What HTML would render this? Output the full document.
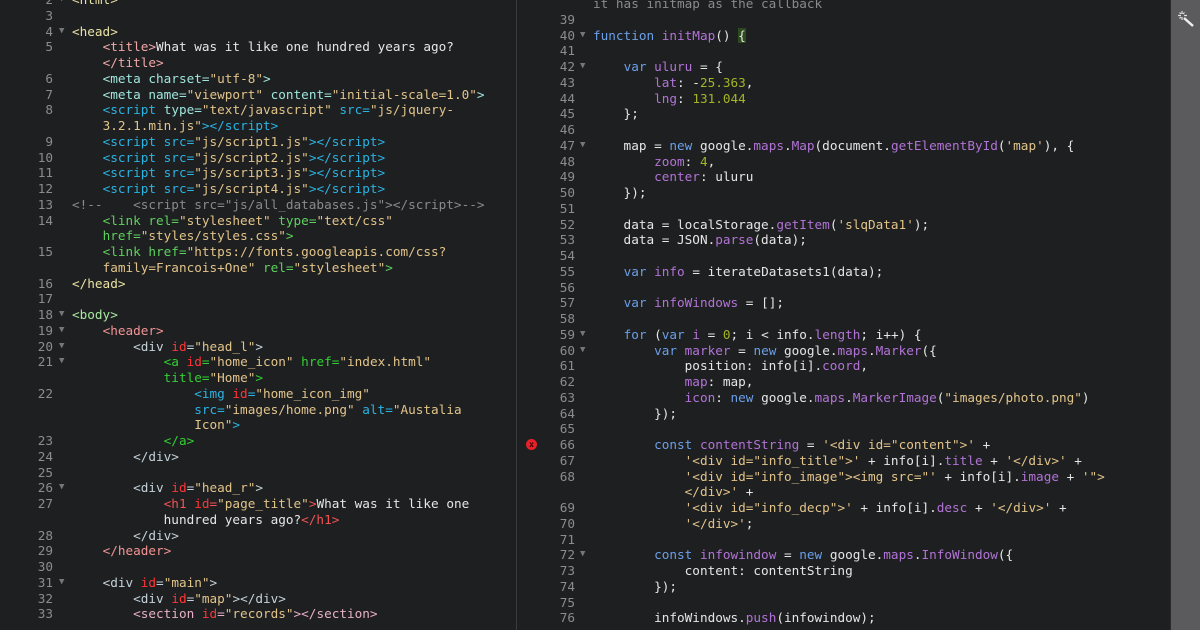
<!DOCTYPE html>
<html><head><meta charset="utf-8"><style>
body{margin:0;width:1200px;height:630px;background:#1e1f21;overflow:hidden;position:relative;font-family:"DejaVu Sans Mono","Liberation Mono",monospace;font-size:12.7px;color:#e6e6e6}
.p{position:absolute;top:0;height:630px;overflow:hidden}
.r{height:15.75px;line-height:15.75px;white-space:pre;position:relative}
.n{position:absolute;text-align:right;color:#8c8c8c}
.f{position:absolute;color:#777;font-size:9px}
.c{position:absolute}
#L .n{left:0;width:53px}#L .f{left:59px}#L .c{left:72px}
#R .n{left:0;width:58px}#R .f{left:63px}#R .c{left:76px}
.hd{color:#e8e2a4}.ti{color:#f2a8a8}.me{color:#9ee6de}.sc{color:#2bb3e2}.s{color:#e2c48a}.cm{color:#8a8a8a}.ln{color:#5cd25c}.bo{color:#a8e8a0}.he{color:#f29494}.dv{color:#c4d2da}.rd{color:#ff3535}.a{color:#33d033}.h1{color:#f25454}.se{color:#e6b0c8}
.k{color:#6b9fe8}.p2{color:#b273d6}.nu{color:#a4b424}
</style></head><body>
<div id="L" class="p" style="left:0;width:516px;top:-8px">
<div class="r"><span class="n">2</span><span class="f">▼</span><span class="c hd">&lt;html&gt;</span></div>
<div class="r"><span class="n">3</span></div>
<div class="r"><span class="n">4</span><span class="f">▼</span><span class="c hd">&lt;head&gt;</span></div>
<div class="r"><span class="n">5</span><span class="c">    <span class="ti">&lt;title&gt;</span>What was it like one hundred years ago?</span></div>
<div class="r"><span class="c">    <span class="ti">&lt;/title&gt;</span></span></div>
<div class="r"><span class="n">6</span><span class="c">    <span class="me">&lt;meta charset=</span><span class="s">"utf-8"</span><span class="me">&gt;</span></span></div>
<div class="r"><span class="n">7</span><span class="c">    <span class="me">&lt;meta name=</span><span class="s">"viewport"</span><span class="me"> content=</span><span class="s">"initial-scale=1.0"</span><span class="me">&gt;</span></span></div>
<div class="r"><span class="n">8</span><span class="c">    <span class="sc">&lt;script</span> <span class="me">type=</span><span class="s">"text/javascript"</span><span class="sc"> src=</span><span class="s">"js/jquery-</span></span></div>
<div class="r"><span class="c">    <span class="s">3.2.1.min.js"</span><span class="sc">&gt;&lt;/script&gt;</span></span></div>
<div class="r"><span class="n">9</span><span class="c">    <span class="sc">&lt;script src=</span><span class="s">"js/script1.js"</span><span class="sc">&gt;&lt;/script&gt;</span></span></div>
<div class="r"><span class="n">10</span><span class="c">    <span class="sc">&lt;script src=</span><span class="s">"js/script2.js"</span><span class="sc">&gt;&lt;/script&gt;</span></span></div>
<div class="r"><span class="n">11</span><span class="c">    <span class="sc">&lt;script src=</span><span class="s">"js/script3.js"</span><span class="sc">&gt;&lt;/script&gt;</span></span></div>
<div class="r"><span class="n">12</span><span class="c">    <span class="sc">&lt;script src=</span><span class="s">"js/script4.js"</span><span class="sc">&gt;&lt;/script&gt;</span></span></div>
<div class="r"><span class="n">13</span><span class="c cm">&lt;!--    &lt;script src="js/all_databases.js"&gt;&lt;/script&gt;--&gt;</span></div>
<div class="r"><span class="n">14</span><span class="c">    <span class="ln">&lt;link rel=</span><span class="s">"stylesheet"</span><span class="ln"> type=</span><span class="s">"text/css"</span></span></div>
<div class="r"><span class="c">    <span class="ln">href=</span><span class="s">"styles/styles.css"</span><span class="ln">&gt;</span></span></div>
<div class="r"><span class="n">15</span><span class="c">    <span class="ln">&lt;link href=</span><span class="s">"https://fonts.googleapis.com/css?</span></span></div>
<div class="r"><span class="c">    <span class="s">family=Francois+One"</span><span class="ln"> rel=</span><span class="s">"stylesheet"</span><span class="ln">&gt;</span></span></div>
<div class="r"><span class="n">16</span><span class="c hd">&lt;/head&gt;</span></div>
<div class="r"><span class="n">17</span></div>
<div class="r"><span class="n">18</span><span class="f">▼</span><span class="c bo">&lt;body&gt;</span></div>
<div class="r"><span class="n">19</span><span class="f">▼</span><span class="c">    <span class="he">&lt;header&gt;</span></span></div>
<div class="r"><span class="n">20</span><span class="f">▼</span><span class="c">        <span class="dv">&lt;div </span><span class="rd">id</span><span class="dv">=</span><span class="s">"head_l"</span><span class="dv">&gt;</span></span></div>
<div class="r"><span class="n">21</span><span class="f">▼</span><span class="c">            <span class="a">&lt;a </span><span class="rd">id</span><span class="a">=</span><span class="s">"home_icon"</span><span class="a"> href=</span><span class="s">"index.html"</span></span></div>
<div class="r"><span class="c">            <span class="a">title=</span><span class="s">"Home"</span><span class="a">&gt;</span></span></div>
<div class="r"><span class="n">22</span><span class="c">                <span class="sc">&lt;img </span><span class="rd">id</span><span class="sc">=</span><span class="s">"home_icon_img"</span></span></div>
<div class="r"><span class="c">                <span class="sc">src=</span><span class="s">"images/home.png"</span><span class="sc"> alt=</span><span class="s">"Austalia</span></span></div>
<div class="r"><span class="c">                <span class="s">Icon"</span><span class="sc">&gt;</span></span></div>
<div class="r"><span class="n">23</span><span class="c">            <span class="a">&lt;/a&gt;</span></span></div>
<div class="r"><span class="n">24</span><span class="c">        <span class="dv">&lt;/div&gt;</span></span></div>
<div class="r"><span class="n">25</span></div>
<div class="r"><span class="n">26</span><span class="f">▼</span><span class="c">        <span class="dv">&lt;div </span><span class="rd">id</span><span class="dv">=</span><span class="s">"head_r"</span><span class="dv">&gt;</span></span></div>
<div class="r"><span class="n">27</span><span class="c">            <span class="h1">&lt;h1 </span><span class="rd">id</span><span class="h1">=</span><span class="s">"page_title"</span><span class="h1">&gt;</span>What was it like one</span></div>
<div class="r"><span class="c">            hundred years ago?<span class="h1">&lt;/h1&gt;</span></span></div>
<div class="r"><span class="n">28</span><span class="c">        <span class="dv">&lt;/div&gt;</span></span></div>
<div class="r"><span class="n">29</span><span class="c">    <span class="he">&lt;/header&gt;</span></span></div>
<div class="r"><span class="n">30</span></div>
<div class="r"><span class="n">31</span><span class="f">▼</span><span class="c">    <span class="dv">&lt;div </span><span class="rd">id</span><span class="dv">=</span><span class="s">"main"</span><span class="dv">&gt;</span></span></div>
<div class="r"><span class="n">32</span><span class="c">        <span class="dv">&lt;div </span><span class="rd">id</span><span class="dv">=</span><span class="s">"map"</span><span class="dv">&gt;&lt;/div&gt;</span></span></div>
<div class="r"><span class="n">33</span><span class="c">        <span class="se">&lt;section </span><span class="rd">id</span><span class="se">=</span><span class="s">"records"</span><span class="se">&gt;&lt;/section&gt;</span></span></div>
<div class="r"><span class="n">34</span><span class="c">        <span class="sc">&lt;script</span></span></div>
</div>
<div style="position:absolute;left:516px;top:0;width:1px;height:630px;background:#3a3b3d"></div>
<div id="R" class="p" style="left:517px;width:653px;top:-4px">
<div class="r"><span class="c cm">it has initmap as the callback</span></div>
<div class="r"><span class="n">39</span></div>
<div class="r"><span class="n">40</span><span class="f">▼</span><span class="c"><span class="k">function</span> <span class="p2">initMap</span>() <span style="background:#2d4a1e">{</span></span></div>
<div class="r"><span class="n">41</span></div>
<div class="r"><span class="n">42</span><span class="f">▼</span><span class="c">    <span class="k">var</span> <span class="p2">uluru</span> = {</span></div>
<div class="r"><span class="n">43</span><span class="c">        <span class="p2">lat</span>: -<span class="nu">25.363</span>,</span></div>
<div class="r"><span class="n">44</span><span class="c">        <span class="p2">lng</span>: <span class="nu">131.044</span></span></div>
<div class="r"><span class="n">45</span><span class="c">    };</span></div>
<div class="r"><span class="n">46</span></div>
<div class="r"><span class="n">47</span><span class="f">▼</span><span class="c">    map = <span class="k">new</span> google.<span class="p2">maps</span>.<span class="p2">Map</span>(document.<span class="p2">getElementById</span>(<span class="s">'map'</span>), {</span></div>
<div class="r"><span class="n">48</span><span class="c">        <span class="p2">zoom</span>: <span class="nu">4</span>,</span></div>
<div class="r"><span class="n">49</span><span class="c">        <span class="p2">center</span>: uluru</span></div>
<div class="r"><span class="n">50</span><span class="c">    });</span></div>
<div class="r"><span class="n">51</span></div>
<div class="r"><span class="n">52</span><span class="c">    data = localStorage.<span class="p2">getItem</span>(<span class="s">'slqData1'</span>);</span></div>
<div class="r"><span class="n">53</span><span class="c">    data = JSON.<span class="p2">parse</span>(data);</span></div>
<div class="r"><span class="n">54</span></div>
<div class="r"><span class="n">55</span><span class="c">    <span class="k">var</span> <span class="p2">info</span> = iterateDatasets1(data);</span></div>
<div class="r"><span class="n">56</span></div>
<div class="r"><span class="n">57</span><span class="c">    <span class="k">var</span> <span class="p2">infoWindows</span> = [];</span></div>
<div class="r"><span class="n">58</span></div>
<div class="r"><span class="n">59</span><span class="f">▼</span><span class="c">    <span class="k">for</span> (<span class="k">var</span> <span class="p2">i</span> = <span class="nu">0</span>; i &lt; info.<span class="p2">length</span>; i++) {</span></div>
<div class="r"><span class="n">60</span><span class="f">▼</span><span class="c">        <span class="k">var</span> <span class="p2">marker</span> = <span class="k">new</span> google.<span class="p2">maps</span>.<span class="p2">Marker</span>({</span></div>
<div class="r"><span class="n">61</span><span class="c">            position: info[i].<span class="p2">coord</span>,</span></div>
<div class="r"><span class="n">62</span><span class="c">            <span class="p2">map</span>: map,</span></div>
<div class="r"><span class="n">63</span><span class="c">            <span class="p2">icon</span>: <span class="k">new</span> google.<span class="p2">maps</span>.<span class="p2">MarkerImage</span>(<span class="s">"images/photo.png"</span>)</span></div>
<div class="r"><span class="n">64</span><span class="c">        });</span></div>
<div class="r"><span class="n">65</span></div>
<div class="r"><span style="position:absolute;left:9px;top:2px;width:11px;height:11px;border-radius:50%;background:#e8202a;color:#300;font-size:8px;line-height:11px;text-align:center;font-weight:bold">x</span><span class="n">66</span><span class="c">        <span class="k">const</span> <span class="p2">contentString</span> = <span class="s">'&lt;div id="content"&gt;'</span> +</span></div>
<div class="r"><span class="n">67</span><span class="c">            <span class="s">'&lt;div id="info_title"&gt;'</span> + info[i].<span class="p2">title</span> + <span class="s">'&lt;/div&gt;'</span> +</span></div>
<div class="r"><span class="n">68</span><span class="c">            <span class="s">'&lt;div id="info_image"&gt;&lt;img src="'</span> + info[i].<span class="p2">image</span> + <span class="s">'"&gt;</span></span></div>
<div class="r"><span class="c">            <span class="s">&lt;/div&gt;'</span> +</span></div>
<div class="r"><span class="n">69</span><span class="c">            <span class="s">'&lt;div id="info_decp"&gt;'</span> + info[i].<span class="p2">desc</span> + <span class="s">'&lt;/div&gt;'</span> +</span></div>
<div class="r"><span class="n">70</span><span class="c">            <span class="s">'&lt;/div&gt;'</span>;</span></div>
<div class="r"><span class="n">71</span></div>
<div class="r"><span class="n">72</span><span class="f">▼</span><span class="c">        <span class="k">const</span> <span class="p2">infowindow</span> = <span class="k">new</span> google.<span class="p2">maps</span>.<span class="p2">InfoWindow</span>({</span></div>
<div class="r"><span class="n">73</span><span class="c">            content: contentString</span></div>
<div class="r"><span class="n">74</span><span class="c">        });</span></div>
<div class="r"><span class="n">75</span></div>
<div class="r"><span class="n">76</span><span class="c">        infoWindows.<span class="p2">push</span>(infowindow);</span></div>
<div class="r"><span class="n">77</span></div>
</div>
<div style="position:absolute;left:1170px;top:0;width:30px;height:630px;background:#5b5b5d;border-left:1px solid #2a2a2c"></div>
<svg style="position:absolute;left:1176px;top:9px" width="20" height="20" viewBox="0 0 20 20"><g stroke="#ddd" stroke-width="1.2"><path d="M6 2v3M6 8v3M2 6.5h3M8 6.5h3M3.5 3.5l1.5 1.5M8.5 3.5l-1.5 1.5M3.5 9.5l1.5-1.5"/></g><path d="M8 9l9 8" stroke="#eee" stroke-width="2.5"/></svg>
</body></html>
